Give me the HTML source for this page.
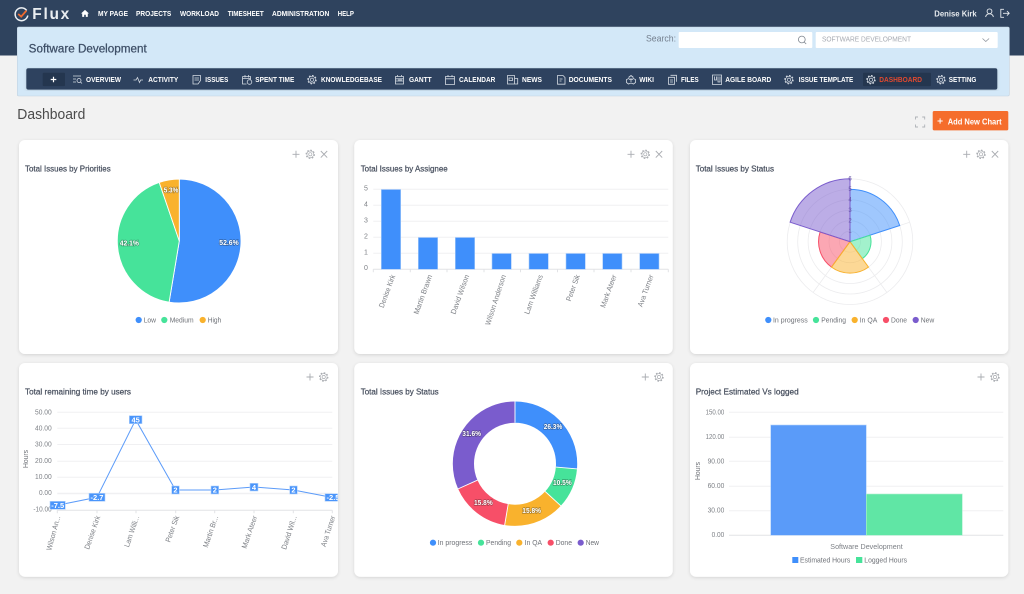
<!DOCTYPE html>
<html><head><meta charset="utf-8"><title>Flux Dashboard</title>
<style>
html,body{margin:0;padding:0;background:#f2f2f2;width:1024px;height:594px;overflow:hidden}
svg{display:block;font-family:"Liberation Sans",sans-serif;filter:blur(.35px)}
text{dominant-baseline:central}
.n{fill:#fff;font-size:7.6px;font-weight:bold}
.t{fill:#474f5e;font-size:8.3px;stroke:#474f5e;stroke-width:.22px}
.l{fill:#6f7278;font-size:7.5px}
.a{fill:#7d8086;font-size:7.5px}
.v{fill:#fff;font-size:7.5px;font-weight:bold;paint-order:stroke;stroke:rgba(30,30,30,.35);stroke-width:1.4px}
.b{fill:#fff;font-size:7.5px;font-weight:bold;text-anchor:middle}
.g{stroke:#f0f0f2;stroke-width:1;fill:none}
.i{fill:none;stroke:#d5dbe3;stroke-width:.8}
.c{fill:none;stroke:#a9acb1;stroke-width:.9}
.card{fill:#fff;filter:url(#s)}
</style></head><body>
<svg width="1024" height="594" viewBox="0 0 1024 594" xmlns="http://www.w3.org/2000/svg">
<defs>
<filter id="s" x="-5%" y="-5%" width="110%" height="110%"><feDropShadow dx="0" dy="1" stdDeviation="1.6" flood-color="#000" flood-opacity=".13"/></filter>
<clipPath id="c1"><rect x="0" y="360" width="337.6" height="220"/></clipPath>
<clipPath id="c2"><rect x="930" y="68" width="46" height="22"/></clipPath>
<symbol id="gear" viewBox="-5 -5 10 10" overflow="visible"><circle r="4.1" fill="none" stroke="currentColor" stroke-width="1.2" stroke-dasharray="1.6 1.6"/><circle r="3.4" fill="none" stroke="currentColor" stroke-width=".6"/><circle r="1.6" fill="none" stroke="currentColor" stroke-width=".7"/></symbol>
</defs>

<rect width="1024" height="594" fill="#f2f2f2"/>
<rect width="1024" height="55.5" fill="#2f435e"/>

<!-- logo -->
<path d="M26.7 10.5A6.4 6.4 0 1 0 27.8 15.5" fill="none" stroke="#eef1f4" stroke-width="1.5"/>
<path d="M18.2 14l3 2.6 5.2-6" fill="none" stroke="#ef6a2e" stroke-width="1.8"/>
<text x="32.3" y="14.5" font-size="15.5" font-weight="bold" fill="#e9edf1" textLength="37" lengthAdjust="spacing">Flux</text>
<path d="M81 13.5l4-3.6 4 3.6h-1.2v3.4h-2v-2.2h-1.6v2.2h-2v-3.4z" fill="#fff"/>

<text class="n" x="98" y="13.5" textLength="30" lengthAdjust="spacingAndGlyphs">MY PAGE</text>
<text class="n" x="136" y="13.5" textLength="35.3" lengthAdjust="spacingAndGlyphs">PROJECTS</text>
<text class="n" x="180" y="13.5" textLength="39" lengthAdjust="spacingAndGlyphs">WORKLOAD</text>
<text class="n" x="227.7" y="13.5" textLength="36" lengthAdjust="spacingAndGlyphs">TIMESHEET</text>
<text class="n" x="272" y="13.5" textLength="57.3" lengthAdjust="spacingAndGlyphs">ADMINISTRATION</text>
<text class="n" x="337.7" y="13.5" textLength="16.3" lengthAdjust="spacingAndGlyphs">HELP</text>
<text x="934.3" y="13.5" font-size="8.5" font-weight="bold" fill="#e6eaee" textLength="42.4" lengthAdjust="spacingAndGlyphs">Denise Kirk</text>
<circle cx="989.5" cy="11.3" r="2.4" fill="none" stroke="#e6eaee" stroke-width=".9"/>
<path d="M985.6 17c.5-2.4 2-3.2 3.9-3.2s3.4.8 3.9 3.2" fill="none" stroke="#e6eaee" stroke-width=".9"/>
<path d="M1004 9.3h-3.2v8h3.2M1003 13.3h6.2M1007 11l2.2 2.3-2.2 2.3" fill="none" stroke="#e6eaee" stroke-width=".9"/>

<!-- project panel -->
<rect x="17.3" y="27" width="992" height="69" rx="1.5" fill="#d3e8f8" stroke="#c3d3e0" stroke-width=".6"/>
<text x="28.7" y="49.3" font-size="11.5" fill="#3d4e66" stroke="#3d4e66" stroke-width=".25" textLength="118" lengthAdjust="spacingAndGlyphs">Software Development</text>
<text x="646" y="38.7" font-size="9" fill="#75808f" textLength="30" lengthAdjust="spacingAndGlyphs">Search:</text>
<rect x="678.7" y="32" width="133.6" height="16" rx="1" fill="#fff"/>
<circle cx="801.8" cy="39.5" r="3.4" fill="none" stroke="#7f868f" stroke-width=".8"/><path d="M804.2 42l2 2" stroke="#7f868f" stroke-width=".8"/>
<rect x="815.7" y="32" width="182" height="16" rx="1" fill="#fff"/>
<text x="822" y="40" font-size="7" fill="#a6aab2" textLength="89" lengthAdjust="spacingAndGlyphs">SOFTWARE DEVELOPMENT</text>
<path d="M982.5 38.5l3.3 3 3.3-3" fill="none" stroke="#8e949c" stroke-width=".8"/>

<!-- nav bar -->
<rect x="26.3" y="68.3" width="971" height="21.3" rx="2" fill="#2f435e" filter="url(#s)"/>
<rect x="42.7" y="72.7" width="22.3" height="13.4" rx="1" fill="#24364f"/>
<path d="M50.7 79.5h5.6M53.5 76.7v5.6" stroke="#fff" stroke-width="1.2"/>
<rect x="863" y="72.7" width="68" height="13.4" rx="1" fill="#24364f"/>

<text class="n" x="86" y="79.7" textLength="35" lengthAdjust="spacingAndGlyphs">OVERVIEW</text>
<text class="n" x="148.3" y="79.7" textLength="30" lengthAdjust="spacingAndGlyphs">ACTIVITY</text>
<text class="n" x="205.3" y="79.7" textLength="23" lengthAdjust="spacingAndGlyphs">ISSUES</text>
<text class="n" x="255.3" y="79.7" textLength="39" lengthAdjust="spacingAndGlyphs">SPENT TIME</text>
<text class="n" x="321" y="79.7" textLength="61" lengthAdjust="spacingAndGlyphs">KNOWLEDGEBASE</text>
<text class="n" x="409" y="79.7" textLength="22.7" lengthAdjust="spacingAndGlyphs">GANTT</text>
<text class="n" x="459" y="79.7" textLength="36.3" lengthAdjust="spacingAndGlyphs">CALENDAR</text>
<text class="n" x="522" y="79.7" textLength="20" lengthAdjust="spacingAndGlyphs">NEWS</text>
<text class="n" x="568.7" y="79.7" textLength="43.3" lengthAdjust="spacingAndGlyphs">DOCUMENTS</text>
<text class="n" x="639.3" y="79.7" textLength="14.7" lengthAdjust="spacingAndGlyphs">WIKI</text>
<text class="n" x="681" y="79.7" textLength="17.7" lengthAdjust="spacingAndGlyphs">FILES</text>
<text class="n" x="725.3" y="79.7" textLength="46" lengthAdjust="spacingAndGlyphs">AGILE BOARD</text>
<text class="n" x="798.7" y="79.7" textLength="54.6" lengthAdjust="spacingAndGlyphs">ISSUE TEMPLATE</text>
<text class="n" x="879.3" y="79.7" textLength="42.7" lengthAdjust="spacingAndGlyphs" style="fill:#e0492f">DASHBOARD</text>
<g clip-path="url(#c2)"><text class="n" x="948.7" y="79.7" textLength="32" lengthAdjust="spacingAndGlyphs">SETTINGS</text></g>

<!-- nav icons -->
<path class="i" d="M73 76h8M73 79h3M73 82h3"/><circle class="i" cx="79" cy="80.5" r="2"/><path class="i" d="M80.5 82l1.5 1.5"/>
<path class="i" d="M133.5 80h2.5l1.5-2.5 2 5 1.2-2.5h2.3"/>
<path class="i" d="M193 75.5h7.5v5l-2.5 3.5h-5zM194.5 78h4.5M194.5 80h4.5"/>
<path class="i" d="M242.5 76.5h8v3M242.5 76.5v7.5h4M242.5 78.5h8M245 75v2.5M248.5 75v2.5"/><circle class="i" cx="249.5" cy="82" r="2.3"/>
<use href="#gear" x="307" y="74.7" width="10" height="10" color="#d5dbe3"/>
<path class="i" d="M395.5 76.5h8v7.5h-8zM395.5 78.8h8M395.5 81h8M397.5 75v1.5M401.5 75v1.5M398 80h4"/>
<path class="i" d="M445.5 76.5h9v8h-9zM445.5 78.8h9M448 75v2M452 75v2"/>
<path class="i" d="M507.5 75.5h7v8.5h-7zM514.5 78.5h3.2v5.5h-3.2M509 78h3.5v2.5H509z"/>
<path class="i" d="M557.5 75.5h5.5l2 2v6.7h-7.5zM559.5 79h3M559.5 81h2"/>
<path class="i" d="M631 75.5l2 1.5v1.5l2.5 1v3l-2 1.5-2.5-1-2.5 1-2-1.5v-3l2.5-1V77zM629 79.5h4M631 78v4"/>
<path class="i" d="M670.5 75.3h6v6.5M668.5 77.3h6v7h-6zM670 80h3M670 82h3"/>
<path class="i" d="M712.5 75h9v9.5h-9zM714.5 76.5v3.5h2v-3.5M718 76.5v5.5h2v-5.5"/>
<use href="#gear" x="784" y="74.7" width="10" height="10" color="#d5dbe3"/>
<use href="#gear" x="866" y="74.7" width="10" height="10" color="#d5dbe3"/>
<use href="#gear" x="936" y="74.7" width="10" height="10" color="#d5dbe3"/>

<!-- page head -->
<text x="17.3" y="115" font-size="14.5" fill="#4b4b4b" textLength="68" lengthAdjust="spacingAndGlyphs">Dashboard</text>
<path d="M915.5 119.5v-2.5h2.5M924.7 119.5v-2.5h-2.5M915.5 124.5v2.5h2.5M924.7 124.5v2.5h-2.5" fill="none" stroke="#aeb2b7" stroke-width=".9"/>
<rect x="932.7" y="111" width="75.6" height="19.4" rx="1.5" fill="#f56d2c"/>
<path d="M937.5 121h5.2M940.1 118.4v5.2" stroke="#fff" stroke-width="1"/>
<text x="947.7" y="121.3" font-size="8.3" font-weight="bold" fill="#fff" textLength="54" lengthAdjust="spacingAndGlyphs">Add New Chart</text>

<!-- cards -->
<rect class="card" x="19" y="140" width="319" height="214" rx="6"/>
<rect class="card" x="354.3" y="140" width="318.4" height="214" rx="6"/>
<rect class="card" x="690" y="140" width="318.3" height="214" rx="6"/>
<rect class="card" x="19" y="363" width="319" height="213.7" rx="6"/>
<rect class="card" x="354.3" y="363" width="318.4" height="213.7" rx="6"/>
<rect class="card" x="690" y="363" width="318.3" height="213.7" rx="6"/>

<!-- card tool icons -->
<g class="c">
<path d="M292.5 154.3h7M296 150.8v7M320.8 151l6.4 6.6M327.2 151l-6.4 6.6"/>
<path d="M627.5 154.3h7M631 150.8v7M655.8 151l6.4 6.6M662.2 151l-6.4 6.6"/>
<path d="M963.2 154.3h7M966.7 150.8v7M991.8 151l6.4 6.6M998.2 151l-6.4 6.6"/>
<path d="M306.5 377h7M310 373.5v7M641.8 377h7M645.3 373.5v7M977.5 377h7M981 373.5v7"/>
</g>
<g color="#a9acb1">
<use href="#gear" x="305.3" y="149.3" width="10" height="10"/>
<use href="#gear" x="640.3" y="149.3" width="10" height="10"/>
<use href="#gear" x="976" y="149.3" width="10" height="10"/>
<use href="#gear" x="318.7" y="372" width="10" height="10"/>
<use href="#gear" x="654" y="372" width="10" height="10"/>
<use href="#gear" x="990" y="372" width="10" height="10"/>
</g>

<!-- titles -->
<text class="t" x="25" y="168.3" textLength="85.7" lengthAdjust="spacingAndGlyphs">Total Issues by Priorities</text>
<text class="t" x="360.7" y="168.3" textLength="87" lengthAdjust="spacingAndGlyphs">Total Issues by Assignee</text>
<text class="t" x="695.7" y="168.3" textLength="78.3" lengthAdjust="spacingAndGlyphs">Total Issues by Status</text>
<text class="t" x="25" y="391.3" textLength="106" lengthAdjust="spacingAndGlyphs">Total remaining time by users</text>
<text class="t" x="360.7" y="391.3" textLength="78" lengthAdjust="spacingAndGlyphs">Total Issues by Status</text>
<text class="t" x="695.7" y="391.3" textLength="103" lengthAdjust="spacingAndGlyphs">Project Estimated Vs logged</text>

<!-- pie -->
<g stroke="#fff" stroke-width=".9">
<path d="M179.3 241V179A62 62 0 1 1 169.1 302.2Z" fill="#3f8ffb"/>
<path d="M179.3 241L169.1 302.2A62 62 0 0 1 159.2 182.4Z" fill="#46e39a"/>
<path d="M179.3 241L159.2 182.4A62 62 0 0 1 179.3 179Z" fill="#f9b22d"/>
</g>
<text class="v" x="219.3" y="242.7" textLength="19.4" lengthAdjust="spacingAndGlyphs">52.6%</text>
<text class="v" x="119.7" y="243" textLength="19.3" lengthAdjust="spacingAndGlyphs">42.1%</text>
<text class="v" x="163.7" y="190" textLength="14.6" lengthAdjust="spacingAndGlyphs">5.3%</text>
<circle cx="138.7" cy="320" r="3.1" fill="#3f8ffb"/><text class="l" x="143.7" y="320" textLength="12.3" lengthAdjust="spacingAndGlyphs">Low</text>
<circle cx="164.3" cy="320" r="3.1" fill="#46e39a"/><text class="l" x="169.7" y="320" textLength="24" lengthAdjust="spacingAndGlyphs">Medium</text>
<circle cx="202.7" cy="320" r="3.1" fill="#f9b22d"/><text class="l" x="207.7" y="320" textLength="13.6" lengthAdjust="spacingAndGlyphs">High</text>

<!-- bar assignee -->
<path class="g" d="M373.3 189.3H668.3M373.3 205.3H668.3M373.3 221.3H668.3M373.3 237.3H668.3M373.3 253.3H668.3"/>
<path d="M373.3 269.3H668.3M373.3 269.3v3M410.3 269.3v3M447 269.3v3M484 269.3v3M520.5 269.3v3M557.5 269.3v3M594 269.3v3M631 269.3v3M668.3 269.3v3" stroke="#e2e3e6" stroke-width="1" fill="none"/>
<g fill="#3f8ffb" stroke="#a9ccfb" stroke-width=".6">
<rect x="381.3" y="189.5" width="19.4" height="79.8"/>
<rect x="418.3" y="237.5" width="19.4" height="31.8"/>
<rect x="455.3" y="237.5" width="19.4" height="31.8"/>
<rect x="492" y="253.5" width="19.3" height="15.8"/>
<rect x="529" y="253.5" width="19.3" height="15.8"/>
<rect x="566" y="253.5" width="19.3" height="15.8"/>
<rect x="602.7" y="253.5" width="19.3" height="15.8"/>
<rect x="639.7" y="253.5" width="19.3" height="15.8"/>
</g>
<g class="a" text-anchor="middle" style="font-size:7px">
<text x="366" y="189">5</text><text x="366" y="205">4</text><text x="366" y="221">3</text><text x="366" y="237">2</text><text x="366" y="253">1</text><text x="366" y="268.5">0</text>
</g>
<g class="a" text-anchor="end">
<text transform="translate(393 275) rotate(-70)" textLength="34.5" lengthAdjust="spacingAndGlyphs">Denise Kirk</text>
<text transform="translate(430 275) rotate(-70)" textLength="41.4" lengthAdjust="spacingAndGlyphs">Martin Brawn</text>
<text transform="translate(467 275) rotate(-70)" textLength="41.4" lengthAdjust="spacingAndGlyphs">David Wilson</text>
<text transform="translate(503.7 275) rotate(-72)" textLength="52.5" lengthAdjust="spacingAndGlyphs">Wilson Anderson</text>
<text transform="translate(540.7 275) rotate(-70)" textLength="41.4" lengthAdjust="spacingAndGlyphs">Lam Williams</text>
<text transform="translate(577.7 275) rotate(-70)" textLength="27.5" lengthAdjust="spacingAndGlyphs">Peter Sik</text>
<text transform="translate(614.3 275) rotate(-70)" textLength="34.5" lengthAdjust="spacingAndGlyphs">Mark Ateer</text>
<text transform="translate(651.3 275) rotate(-70)" textLength="33.6" lengthAdjust="spacingAndGlyphs">Ava Turner</text>
</g>

<!-- polar -->
<g fill="none" stroke="#ececee" stroke-width=".8">
<circle cx="850" cy="241.7" r="10.5"/><circle cx="850" cy="241.7" r="21"/><circle cx="850" cy="241.7" r="31.4"/><circle cx="850" cy="241.7" r="41.9"/><circle cx="850" cy="241.7" r="52.3"/><circle cx="850" cy="241.7" r="62.8"/>
<path d="M850 241.7L909.7 222.3M850 241.7L886.9 292.5M850 241.7L813.1 292.5"/>
</g>
<g stroke-width="1">
<path d="M850 241.7V189.4A52.3 52.3 0 0 1 899.7 225.5Z" fill="#3f8ffb" fill-opacity=".5" stroke="#3f8ffb"/>
<path d="M850 241.7L870 235.2A21 21 0 0 1 862.3 258.7Z" fill="#46e39a" fill-opacity=".5" stroke="#46e39a"/>
<path d="M850 241.7L820.1 232A31.4 31.4 0 0 0 831.5 267.1Z" fill="#f74f68" fill-opacity=".5" stroke="#f74f68"/>
<path d="M850 241.7L868.5 267.1A31.4 31.4 0 0 1 831.5 267.1Z" fill="#f9b22d" fill-opacity=".5" stroke="#f9b22d"/>
<path d="M850 241.7L790.1 222.2A63 63 0 0 1 850 178.7Z" fill="#7a5ccd" fill-opacity=".5" stroke="#7a5ccd"/>
</g>
<g font-size="6" fill="#6a5aa8" text-anchor="middle">
<text x="850" y="179.5">6</text><text x="850" y="190">5</text><text x="850" y="200.5">4</text><text x="850" y="211">3</text><text x="850" y="221.5">2</text><text x="850" y="232">1</text>
</g>
<circle cx="768.3" cy="320" r="3.1" fill="#3f8ffb"/><text class="l" x="773" y="320" textLength="34.7" lengthAdjust="spacingAndGlyphs">In progress</text>
<circle cx="816" cy="320" r="3.1" fill="#46e39a"/><text class="l" x="821.3" y="320" textLength="24.7" lengthAdjust="spacingAndGlyphs">Pending</text>
<circle cx="854.7" cy="320" r="3.1" fill="#f9b22d"/><text class="l" x="859.7" y="320" textLength="17.6" lengthAdjust="spacingAndGlyphs">In QA</text>
<circle cx="886" cy="320" r="3.1" fill="#f74f68"/><text class="l" x="891" y="320" textLength="16" lengthAdjust="spacingAndGlyphs">Done</text>
<circle cx="915.7" cy="320" r="3.1" fill="#7a5ccd"/><text class="l" x="920.7" y="320" textLength="13.6" lengthAdjust="spacingAndGlyphs">New</text>

<!-- line chart -->
<path class="g" d="M57.3 412.3H332.3M57.3 428.3H332.3M57.3 444.5H332.3M57.3 461.3H332.3M57.3 477.3H332.3"/>
<path d="M57.3 493.5H332.3" stroke="#f0f0f2" stroke-width="1.6"/>
<path d="M57.3 510.3H332.3M57.3 510.3v3M97 510.3v3M136 510.3v3M175.7 510.3v3M214.7 510.3v3M254 510.3v3M293.3 510.3v3M332.3 510.3v3" stroke="#e2e3e6" stroke-width="1" fill="none"/>
<g class="a" text-anchor="end">
<text x="51.7" y="412" textLength="16.7" lengthAdjust="spacingAndGlyphs">50.00</text><text x="51.7" y="428" textLength="16.7" lengthAdjust="spacingAndGlyphs">40.00</text><text x="51.7" y="444" textLength="16.7" lengthAdjust="spacingAndGlyphs">30.00</text><text x="51.7" y="460.5" textLength="16.7" lengthAdjust="spacingAndGlyphs">20.00</text><text x="51.7" y="476.5" textLength="16.7" lengthAdjust="spacingAndGlyphs">10.00</text><text x="51.7" y="492.7" textLength="12.7" lengthAdjust="spacingAndGlyphs">0.00</text><text x="51.7" y="509" textLength="18.3" lengthAdjust="spacingAndGlyphs">-10.00</text>
</g>
<text class="a" transform="translate(25.3 459) rotate(-90)" text-anchor="middle" textLength="18" lengthAdjust="spacingAndGlyphs" style="fill:#6c6f75">Hours</text>
<g class="a" text-anchor="end">
<text transform="translate(58 516) rotate(-75)" textLength="35.5" lengthAdjust="spacingAndGlyphs">Wilson An...</text>
<text transform="translate(98 516) rotate(-71)" textLength="35" lengthAdjust="spacingAndGlyphs">Denise Kirk</text>
<text transform="translate(137 516) rotate(-71)" textLength="32.6" lengthAdjust="spacingAndGlyphs">Lam Willi...</text>
<text transform="translate(177 516) rotate(-70)" textLength="27.5" lengthAdjust="spacingAndGlyphs">Peter Sik</text>
<text transform="translate(216 516) rotate(-71)" textLength="33" lengthAdjust="spacingAndGlyphs">Martin Br...</text>
<text transform="translate(255 516) rotate(-71)" textLength="34" lengthAdjust="spacingAndGlyphs">Mark Ateer</text>
<text transform="translate(294.5 516) rotate(-72)" textLength="35" lengthAdjust="spacingAndGlyphs">David Wil...</text>
<text transform="translate(333 516) rotate(-72)" textLength="32" lengthAdjust="spacingAndGlyphs">Ava Turner</text>
</g>
<g clip-path="url(#c1)">
<polyline points="57.3,505.3 97,497.3 135.7,419.7 175.5,490 214.8,490 254,487 293.5,490 332.3,497.5" fill="none" stroke="#5b9bf9" stroke-width="1"/>
<g fill="#4a95fb" stroke="#b4d3fb" stroke-width=".6">
<rect x="50" y="501.3" width="15.3" height="8"/>
<rect x="89" y="493.3" width="16" height="8"/>
<rect x="129.3" y="415.7" width="12.7" height="8"/>
<rect x="171.7" y="486" width="7.6" height="8"/>
<rect x="211" y="486" width="7.7" height="8"/>
<rect x="250" y="483.3" width="8" height="7.7"/>
<rect x="289.7" y="486" width="7.6" height="8"/>
<rect x="325" y="493.7" width="16" height="7.6"/>
</g>
<text class="b" x="57.7" y="505.5">-7.5</text>
<text class="b" x="97" y="497.5">-2.7</text>
<text class="b" x="135.7" y="419.9">45</text>
<text class="b" x="175.5" y="490.2">2</text>
<text class="b" x="214.8" y="490.2">2</text>
<text class="b" x="254" y="487.3">4</text>
<text class="b" x="293.5" y="490.2">2</text>
<text class="b" x="333" y="497.7">-2.5</text>
</g>

<!-- donut -->
<g fill="none" stroke-width="21.2" transform="rotate(-90 515 463.7)">
<circle cx="515" cy="463.7" r="51.6" pathLength="100" stroke="#3f8ffb" stroke-dasharray="26.32 73.68"/>
<circle cx="515" cy="463.7" r="51.6" pathLength="100" stroke="#46e39a" stroke-dasharray="10.53 89.47" stroke-dashoffset="-26.32"/>
<circle cx="515" cy="463.7" r="51.6" pathLength="100" stroke="#f9b22d" stroke-dasharray="15.79 84.21" stroke-dashoffset="-36.85"/>
<circle cx="515" cy="463.7" r="51.6" pathLength="100" stroke="#f74f68" stroke-dasharray="15.79 84.21" stroke-dashoffset="-52.64"/>
<circle cx="515" cy="463.7" r="51.6" pathLength="100" stroke="#7a5ccd" stroke-dasharray="31.57 68.43" stroke-dashoffset="-68.43"/>
</g>
<path d="M515 422.5V401M555.9 467.1L577.5 468.9M545.2 491.5L561.2 506.2M508.2 504.1L504.6 525.5M477.4 480.2L457.8 489" stroke="#fff" stroke-width=".9" fill="none"/>
<text class="v" x="543.7" y="426.7" textLength="18.6" lengthAdjust="spacingAndGlyphs">26.3%</text>
<text class="v" x="553" y="482.7" textLength="18.7" lengthAdjust="spacingAndGlyphs">10.5%</text>
<text class="v" x="522.3" y="510.7" textLength="18.7" lengthAdjust="spacingAndGlyphs">15.8%</text>
<text class="v" x="474" y="502.3" textLength="18.7" lengthAdjust="spacingAndGlyphs">15.8%</text>
<text class="v" x="462.3" y="433.7" textLength="18.7" lengthAdjust="spacingAndGlyphs">31.6%</text>
<circle cx="433" cy="542.7" r="3.1" fill="#3f8ffb"/><text class="l" x="437.7" y="542.7" textLength="34.6" lengthAdjust="spacingAndGlyphs">In progress</text>
<circle cx="481" cy="542.7" r="3.1" fill="#46e39a"/><text class="l" x="486" y="542.7" textLength="25" lengthAdjust="spacingAndGlyphs">Pending</text>
<circle cx="519.3" cy="542.7" r="3.1" fill="#f9b22d"/><text class="l" x="524.7" y="542.7" textLength="17.3" lengthAdjust="spacingAndGlyphs">In QA</text>
<circle cx="550.7" cy="542.7" r="3.1" fill="#f74f68"/><text class="l" x="555.7" y="542.7" textLength="16.3" lengthAdjust="spacingAndGlyphs">Done</text>
<circle cx="580.7" cy="542.7" r="3.1" fill="#7a5ccd"/><text class="l" x="585.7" y="542.7" textLength="13.3" lengthAdjust="spacingAndGlyphs">New</text>

<!-- est vs logged -->
<path class="g" d="M729 412.3H1003.3M729 437.3H1003.3M729 461.3H1003.3M729 486.3H1003.3M729 510.7H1003.3"/>
<path d="M729 535.3H1003.3" stroke="#e2e3e6" stroke-width="1"/>
<rect x="770.7" y="425" width="95.6" height="110.3" fill="#5a9bf9" stroke="#b4d3fb" stroke-width=".6"/>
<rect x="866.3" y="494" width="96" height="41.3" fill="#60e6a5" stroke="#b0f0d0" stroke-width=".6"/>
<g class="a" text-anchor="end">
<text x="724.3" y="412" textLength="18.7" lengthAdjust="spacingAndGlyphs">150.00</text><text x="724.3" y="436.7" textLength="18.7" lengthAdjust="spacingAndGlyphs">120.00</text><text x="724.3" y="461" textLength="16.7" lengthAdjust="spacingAndGlyphs">90.00</text><text x="724.3" y="485.5" textLength="16.7" lengthAdjust="spacingAndGlyphs">60.00</text><text x="724.3" y="510" textLength="16.7" lengthAdjust="spacingAndGlyphs">30.00</text><text x="724.3" y="534.5" textLength="12.7" lengthAdjust="spacingAndGlyphs">0.00</text>
</g>
<text class="a" transform="translate(697.3 471) rotate(-90)" text-anchor="middle" textLength="18" lengthAdjust="spacingAndGlyphs" style="fill:#6c6f75">Hours</text>
<text class="a" x="830.3" y="546.7" textLength="72.4" lengthAdjust="spacingAndGlyphs">Software Development</text>
<rect x="792.3" y="557" width="6" height="6" fill="#3f8ffb"/><text class="l" x="800" y="560" textLength="50.3" lengthAdjust="spacingAndGlyphs">Estimated Hours</text>
<rect x="856" y="557" width="6.3" height="6" fill="#46e39a"/><text class="l" x="864.3" y="560" textLength="42.7" lengthAdjust="spacingAndGlyphs">Logged Hours</text>
</svg>
</body></html>
